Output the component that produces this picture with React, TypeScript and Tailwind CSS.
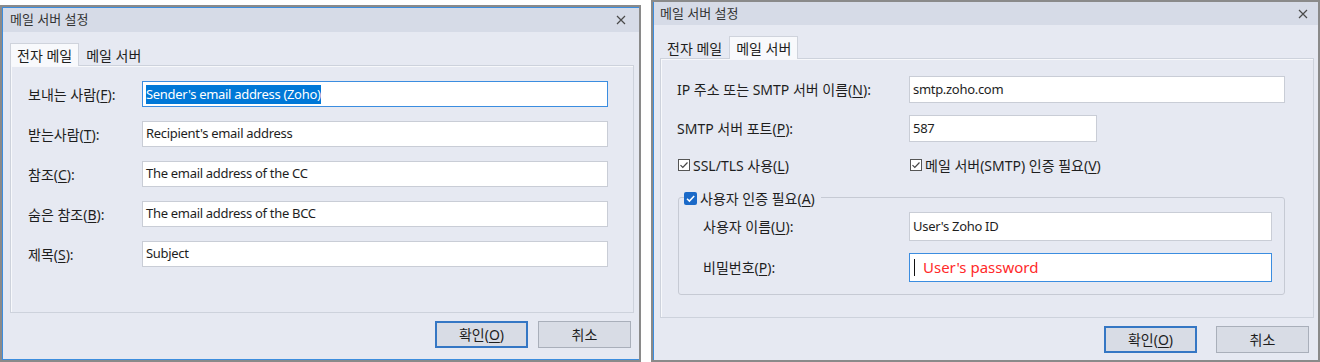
import React from "react";

function Mn({ k }: { k: string }) {
  return <u className="underline-offset-[2px]">{k}</u>;
}

function Label({ text, k, className = "" }: { text: string; k: string; className?: string }) {
  return (
    <span className={"shrink-0 text-[14px] text-[#1e1e1e] " + className}>
      {text}(<Mn k={k} />):
    </span>
  );
}

function TitleBar({ className = "" }: { className?: string }) {
  return (
    <div className={"flex items-center justify-between bg-[#d6dbe7] text-[13px] text-[#333] " + className}>
      <span>메일 서버 설정</span>
      <svg width="10" height="10" viewBox="0 0 10 10">
        <path d="M1 1L9 9M9 1L1 9" stroke="#4a4a4a" strokeWidth="1.2" />
      </svg>
    </div>
  );
}

function Tabs({ active }: { active: 0 | 1 }) {
  const tabs = ["전자 메일", "메일 서버"];
  return (
    <div className="relative z-10 -mb-px flex items-end text-[14px] text-[#1e1e1e]">
      {tabs.map((t, i) =>
        i === active ? (
          <div
            key={t}
            className="flex h-[23px] items-center border border-b-0 border-[#cfd3dc] bg-[#f8f9fc] px-[6px]"
          >
            {t}
          </div>
        ) : (
          <div key={t} className="flex h-[21px] items-center px-[7px]">
            {t}
          </div>
        )
      )}
    </div>
  );
}

function Input({
  value,
  className = "",
  focused = false,
}: {
  value?: React.ReactNode;
  className?: string;
  focused?: boolean;
}) {
  return (
    <div
      className={
        "flex items-center bg-white px-[3px] text-[13px] tracking-[-0.3px] text-[#1e1e1e] " +
        (focused ? "border border-[#3b8de0] " : "border border-[#c9cdd6] ") +
        className
      }
    >
      {value}
    </div>
  );
}

function Button({ children, primary = false }: { children: React.ReactNode; primary?: boolean }) {
  return (
    <div
      className={
        "flex h-[27px] w-[93px] items-center justify-center bg-[#d8dce5] text-[14px] text-[#1e1e1e] " +
        (primary ? "border-2 border-[#3577c4]" : "border border-[#a9afba]")
      }
    >
      {children}
    </div>
  );
}

function SmallCheck() {
  return (
    <svg width="12" height="12" viewBox="0 0 12 12" className="shrink-0">
      <rect x="0.5" y="0.5" width="11" height="11" fill="#fff" stroke="#555" />
      <path d="M2.5 6.2L4.8 8.5L9.5 3.5" fill="none" stroke="#444" strokeWidth="1.2" />
    </svg>
  );
}

function BlueCheck() {
  return (
    <svg width="13" height="13" viewBox="0 0 13 13" className="shrink-0">
      <rect x="0" y="0" width="13" height="13" rx="2" fill="#1a69c8" />
      <path d="M3 6.8L5.4 9.1L10.2 4" fill="none" stroke="#fff" strokeWidth="1.5" />
    </svg>
  );
}

const leftRows = [
  { text: "보내는 사람", k: "F", value: "Sender's email address (Zoho)" },
  { text: "받는사람", k: "T", value: "Recipient's email address" },
  { text: "참조", k: "C", value: "The email address of the CC" },
  { text: "숨은 참조", k: "B", value: "The email address of the BCC" },
  { text: "제목", k: "S", value: "Subject" },
];

function LeftDialog() {
  return (
    <div className="mt-[5px] h-[357px] w-[641px] shrink-0 border-2 border-[#8a8a8a]">
      <div className="flex h-full flex-col border-b border-l border-t border-[#3c8dde] bg-[#e6e9f2]">
        <TitleBar className="h-[24px] pl-[7px] pr-[13px]" />
        <div className="ml-[7px] mr-[5px] pt-[11px]">
          <Tabs active={0} />
          <div className="flex h-[248px] flex-col gap-[14px] border border-[#cdd2dc] bg-[#e6e9f2] pl-[17px] pr-[23px] pt-[15px] shadow-[inset_1px_1px_0_#f7f8fb]">
            {leftRows.map((r, i) => (
              <div key={r.k} className="flex items-center">
                <Label text={r.text} k={r.k} className="w-[114px]" />
                <Input
                  className="h-[26px] w-[466px]"
                  focused={i === 0}
                  value={
                    i === 0 ? (
                      <span className="bg-[#0078d7] leading-[19px] text-white">{r.value}</span>
                    ) : (
                      r.value
                    )
                  }
                />
              </div>
            ))}
          </div>
        </div>
        <div className="mt-[8px] flex justify-end gap-[10px] pr-[8px]">
          <Button primary>
            <span>
              확인(<Mn k="O" />)
            </span>
          </Button>
          <Button>취소</Button>
        </div>
      </div>
    </div>
  );
}

function RightDialog() {
  return (
    <div className="h-[362px] w-[669px] shrink-0 border-2 border-[#8a8a8a]">
      <div className="flex h-full flex-col border-l border-[#3c8dde] bg-[#e6e9f2]">
        <TitleBar className="h-[23px] pl-[6px] pr-[10px]" />
        <div className="ml-[6px] mr-[4px] pt-[11px]">
          <Tabs active={1} />
          <div className="flex h-[260px] flex-col border border-[#cdd2dc] bg-[#e6e9f2] pl-[16px] pt-[17px] shadow-[inset_1px_1px_0_#f7f8fb]">
            <div className="flex items-center">
              <Label text="IP 주소 또는 SMTP 서버 이름" k="N" className="w-[232px]" />
              <Input className="h-[27px] w-[376px]" value="smtp.zoho.com" />
            </div>
            <div className="mt-[12px] flex items-center">
              <Label text="SMTP 서버 포트" k="P" className="w-[232px]" />
              <Input className="h-[27px] w-[188px]" value="587" />
            </div>
            <div className="mt-[15px] flex h-[16px] items-center text-[14px] text-[#1e1e1e]">
              <div className="flex w-[232px] items-center gap-[3px] pl-[1px]">
                <SmallCheck />
                <span>
                  SSL/TLS 사용(<Mn k="L" />)
                </span>
              </div>
              <div className="flex items-center gap-[3px] pl-[1px]">
                <SmallCheck />
                <span>
                  메일 서버(SMTP) 인증 필요(<Mn k="V" />)
                </span>
              </div>
            </div>
            <div className="relative ml-[1px] mt-[24px] flex h-[98px] w-[607px] flex-col gap-[12px] rounded-[3px] border border-[#c6cad4] pl-[24px] pt-[14px]">
              <div className="absolute -top-[10px] left-[5px] flex items-center gap-[3px] bg-[#e6e9f2] pr-[6px] text-[14px] text-[#1e1e1e]">
                <BlueCheck />
                <span>
                  사용자 인증 필요(<Mn k="A" />)
                </span>
              </div>
              <div className="flex items-center">
                <Label text="사용자 이름" k="U" className="w-[206px]" />
                <Input className="h-[29px] w-[363px]" value="User's Zoho ID" />
              </div>
              <div className="flex items-center">
                <Label text="비밀번호" k="P" className="w-[206px]" />
                <Input
                  focused
                  className="h-[29px] w-[363px] pl-[4px]"
                  value={
                    <span className="flex items-center tracking-normal">
                      <span className="h-[17px] w-px bg-[#111]" />
                      <span className="ml-[8px] text-[15px] text-[#ff2a2a]">User's password</span>
                    </span>
                  }
                />
              </div>
            </div>
          </div>
        </div>
        <div className="mt-[8px] flex justify-end gap-[19px] pr-[9px]">
          <Button primary>
            <span>
              확인(<Mn k="O" />)
            </span>
          </Button>
          <Button>취소</Button>
        </div>
      </div>
    </div>
  );
}

export default function App() {
  return (
    <div className="flex h-[362px] w-[1320px] items-start gap-[10px] overflow-hidden bg-white font-['Noto_Sans','Noto_Sans_CJK_KR',sans-serif]">
      <LeftDialog />
      <RightDialog />
    </div>
  );
}
